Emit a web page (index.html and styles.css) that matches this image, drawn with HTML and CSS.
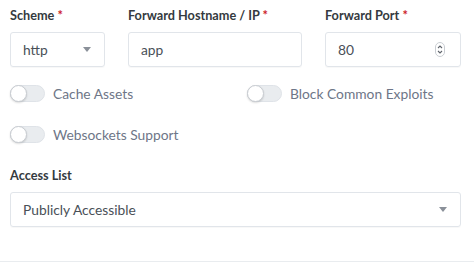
FILE: index.html
```html
<!DOCTYPE html>
<html>
<head>
<meta charset="utf-8">
<link rel="stylesheet" href="styles.css">
</head>
<body>
<div class="form">
  <div class="row-3">
    <div class="field">
      <label class="label">Scheme <span class="req">*</span></label>
      <div class="control select">
        <span class="value">http</span>
        <svg class="caret" width="8" height="5" viewBox="0 0 8 5"><path d="M0 0h8L4 5z" fill="#8a9099"/></svg>
      </div>
    </div>
    <div class="field">
      <label class="label">Forward Hostname / IP <span class="req">*</span></label>
      <div class="control"><span class="value">app</span></div>
    </div>
    <div class="field">
      <label class="label">Forward Port <span class="req">*</span></label>
      <div class="control select">
        <span class="value">80</span>
        <svg class="spin" width="10" height="15" viewBox="0 0 10 15"><rect x="0.5" y="0.5" width="9" height="14" rx="4.5" fill="none" stroke="#c9cdd2"/><path d="M3 6l2-2 2 2M3 9l2 2 2-2" fill="none" stroke="#5f646b" stroke-width="1.1"/></svg>
      </div>
    </div>
  </div>
  <div class="row-2">
    <div class="toggle-item"><span class="toggle"><span class="knob"></span></span><span class="toggle-label">Cache Assets</span></div>
    <div class="toggle-item"><span class="toggle"><span class="knob"></span></span><span class="toggle-label">Block Common Exploits</span></div>
    <div class="toggle-item"><span class="toggle"><span class="knob"></span></span><span class="toggle-label">Websockets Support</span></div>
  </div>
  <div class="field">
    <label class="label">Access List</label>
    <div class="control select wide">
      <span class="value">Publicly Accessible</span>
      <svg class="caret" width="8" height="5" viewBox="0 0 8 5"><path d="M0 0h8L4 5z" fill="#8a9099"/></svg>
    </div>
  </div>
</div>
<div class="divider"></div>
</body>
</html>
```
FILE: styles.css
```css
html, body {
  margin: 0;
  padding: 0;
  background: #fff;
}
body {
  font-family: "Lato", "Noto Sans", sans-serif;
  color: #495057;
  width: 474px;
  height: 269px;
  overflow: hidden;
}
.form {
  padding: 6px 13px 0 10px;
  height: 254px;
  box-sizing: border-box;
}
.row-3 {
  display: grid;
  grid-template-columns: 95px 174px 136px;
  column-gap: 23px;
}
.field {
  display: flex;
  flex-direction: column;
}
.label {
  font-size: 12.7px;
  font-weight: 700;
  color: #343a40;
  line-height: 18px;
  margin-bottom: 8px;
}
.req {
  color: #cd201f;
}
.control {
  height: 35px;
  box-sizing: border-box;
  border: 1px solid #e1e5ea;
  border-radius: 3px;
  display: flex;
  align-items: center;
  padding: 0 12px;
  font-size: 13.8px;
  color: #495057;
  box-shadow: 0 1px 1px rgba(0, 0, 0, 0.03);
}
.select {
  justify-content: space-between;
}
.caret {
  margin-right: 1px;
}
.spin {
  margin-right: 3px;
}
.row-2 {
  display: grid;
  grid-template-columns: 214px 1fr;
  column-gap: 23px;
  row-gap: 24px;
  margin-top: 18px;
  margin-bottom: 23px;
}
.toggle-item {
  display: flex;
  align-items: center;
  height: 17px;
}
.toggle {
  width: 35px;
  height: 17px;
  box-sizing: border-box;
  border-radius: 9px;
  background: #e9ecef;
  border: 1px solid #dfe3e8;
  position: relative;
  flex: none;
}
.knob {
  position: absolute;
  left: -1px;
  top: -1px;
  width: 17px;
  height: 17px;
  box-sizing: border-box;
  border-radius: 50%;
  background: #fff;
  border: 1px solid #c8ccd1;
  box-shadow: 0 1px 2px rgba(0, 0, 0, 0.15);
}
.toggle-label {
  margin-left: 8px;
  font-size: 13.8px;
  color: #6e7687;
}
.wide {
  width: 451px;
}
.divider {
  border-top: 1px solid #e9ecef;
  margin-top: 7px;
}
```
